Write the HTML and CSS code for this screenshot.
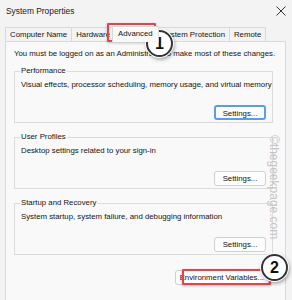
FILE: index.html
```html
<!DOCTYPE html>
<html lang="en">
<head>
    <meta charset="UTF-8">
    <title>System Properties</title>
    <link rel="stylesheet" href="styles.css">
</head>
<body>
    <div class="window">
        <div class="titlebar">
            <span class="title">System Properties</span>
            <svg class="close" width="10" height="10" viewBox="0 0 10 10">
                <path d="M0.5 0.5 L9.5 9.5 M9.5 0.5 L0.5 9.5" stroke="#333" stroke-width="1"/>
            </svg>
        </div>

        <div class="tabs">
            <div class="tab">Computer Name</div>
            <div class="tab">Hardware</div>
            <div class="tab active">Advanced</div>
            <div class="tab">System Protection</div>
            <div class="tab">Remote</div>
        </div>

        <div class="panel">
            <p class="admin">You must be logged on as an Administrator to make most of these changes.</p>

            <fieldset class="group">
                <legend>Performance</legend>
                <p class="desc">Visual effects, processor scheduling, memory usage, and virtual memory</p>
                <div class="row"><button class="btn focused">Settings...</button></div>
            </fieldset>

            <fieldset class="group">
                <legend>User Profiles</legend>
                <p class="desc">Desktop settings related to your sign-in</p>
                <div class="row"><button class="btn">Settings...</button></div>
            </fieldset>

            <fieldset class="group">
                <legend>Startup and Recovery</legend>
                <p class="desc">System startup, system failure, and debugging information</p>
                <div class="row"><button class="btn">Settings...</button></div>
            </fieldset>

            <div class="row env-row"><button class="btn env">Environment Variables...</button></div>
        </div>

        <div class="mark mark-tab"></div>
        <div class="mark mark-env"></div>
        <div class="badge badge-1">1</div>
        <div class="badge badge-2">2</div>
        <div class="watermark">©thegeekpage.com</div>
    </div>
</body>
</html>
```

FILE: styles.css
```css
html, body {
    margin: 0;
    padding: 0;
}

body {
    font-family: 'Liberation Sans', Arial, sans-serif;
    font-size: 7.8px;
    color: #141414;
    background: #f3f3f3;
}

.window {
    position: relative;
    width: 292px;
    height: 300px;
    overflow: hidden;
    background: #f3f3f3;
}

.titlebar {
    display: flex;
    align-items: center;
    justify-content: space-between;
    height: 21px;
    padding: 0 6px 0 6px;
}

.title {
    font-size: 8.4px;
    color: #1a1a1a;
}

.close {
    margin-top: 1px;
}

.tabs {
    display: flex;
    margin: 7px 0 0 5px;
    height: 13px;
    align-items: flex-end;
}

.tab {
    height: 13px;
    line-height: 13px;
    padding: 0 4px;
    border: 1px solid #d9d9d9;
    border-bottom: none;
    margin-right: -1px;
    background: #f3f3f3;
    white-space: nowrap;
}

.tab.active {
    position: relative;
    z-index: 1;
    height: 15px;
    margin: 0 -2px -1px -2px;
    padding: 0 5px;
    background: #f9f9f9;
    line-height: 14px;
}

.panel {
    margin: 0 6px 0 5px;
    height: 260px;
    border: 1px solid #d9d9d9;
    background: #f9f9f9;
    padding: 0 12px 0 8px;
}

.admin {
    margin: 6px 0 5px 0;
    line-height: 12px;
    text-align: center;
    white-space: nowrap;
}

.group {
    margin: 0 0 8px 0;
    padding: 0 6px 6px 6px;
    border: 1px solid #dcdcdc;
    height: 50px;
    min-width: 0;
}

.group legend {
    padding: 0 1px;
    margin-left: -1px;
    line-height: 12px;
}

.desc {
    margin: 2px 0 0 0;
    line-height: 12px;
    white-space: nowrap;
}

.row {
    display: flex;
    justify-content: flex-end;
}

.group .row {
    margin-top: 14px;
}

.btn {
    font-family: inherit;
    font-size: 7.8px;
    height: 15px;
    padding: 0 4px;
    line-height: 13px;
    border: 1px solid #cfcfcf;
    border-radius: 3px;
    background: #fdfdfd;
    color: #141414;
    white-space: nowrap;
}

.btn.focused {
    border: 2px solid #5e9ce6;
}

.group .btn {
    width: 52px;
}

.env-row {
    margin-top: 15px;
    margin-right: 4px;
}

.btn.env {
    padding: 0 4px;
}

.mark {
    position: absolute;
    border: 2px solid #e8414b;
    border-radius: 1px;
    box-shadow: 0 1px 3px rgba(0, 0, 0, 0.25);
}

.mark-tab {
    left: 107px;
    top: 23px;
    width: 45px;
    height: 15px;
}

.mark-env {
    left: 182px;
    top: 269px;
    width: 85px;
    height: 12px;
}

.badge {
    position: absolute;
    width: 23px;
    height: 23px;
    border-radius: 50%;
    border: 2px solid #333;
    background: #fff;
    box-shadow: 0 0 0 1px #fff, 1px 2px 4px rgba(0, 0, 0, 0.45);
    font-weight: bold;
    font-size: 16px;
    line-height: 23px;
    text-align: center;
    color: #111;
}

.badge-1 {
    left: 146px;
    top: 30px;
}

.badge-2 {
    left: 261px;
    top: 254px;
}

.watermark {
    position: absolute;
    left: 281px;
    top: 135px;
    transform-origin: 0 0;
    transform: rotate(90deg);
    font-size: 12px;
    color: #c4c4c4;
    white-space: nowrap;
}
```
